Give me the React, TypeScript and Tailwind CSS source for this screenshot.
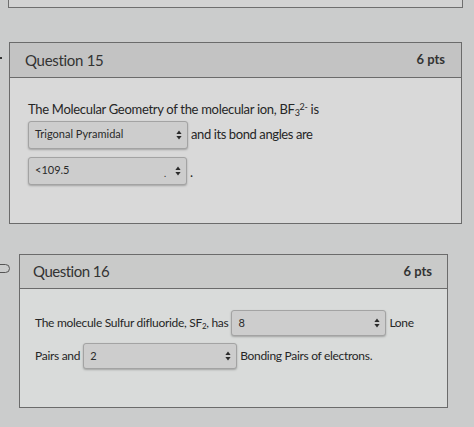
import React from 'react'

function Arrows() {
  return (
    <svg width="6" height="10" viewBox="0 0 6 10" className="shrink-0">
      <path d="M3 0.5 L5.6 4 H0.4 Z" fill="#2b2b2b" />
      <path d="M3 9.5 L5.6 6 H0.4 Z" fill="#2b2b2b" />
    </svg>
  )
}

function Select({ value, className, dot }: { value: string; className: string; dot?: boolean }) {
  return (
    <div
      className={`flex items-center justify-between rounded-[3px] border border-[#a3a3a3] bg-[#cdcdcd] pl-[6px] pr-[5px] text-[11px] text-[#2a2a2a] shadow-[0_1px_2px_rgba(0,0,0,0.25)] ${className}`}
    >
      <span>{value}</span>
      <span className="flex items-center gap-[9px]">
        {dot && <span className="mt-[6px] text-[9px] leading-none">.</span>}
        <Arrows />
      </span>
    </div>
  )
}

export default function App() {
  return (
    <div
      className="relative h-[427px] w-[474px] overflow-hidden bg-[#cbcccc] text-[#262626]"
      style={{ fontFamily: 'Lato, "Open Sans", sans-serif' }}
    >
      {/* previous question tail */}
      <div className="ml-[8px] h-[8px] w-[455px] border-x border-b border-[#6f6f6f] bg-[#d3d3d3]" />

      {/* Question 15 */}
      <div className="ml-[9px] mt-[34px] w-[453px] border border-[#6b6b6b]">
        <div className="flex h-[35px] items-center justify-between border-b border-[#6b6b6b] bg-[#c3c3c3] pl-[15px] pr-[16px]">
          <span className="text-[15px] tracking-[-0.3px] text-[#333]">Question 15</span>
          <span className="text-[13px] font-bold text-[#333]">6 pts</span>
        </div>
        <div className="h-[145px] bg-[#d9d9d9] pl-[18px] pt-[22px]">
          <p className="text-[13px] tracking-[-0.3px]">
            The Molecular Geometry of the molecular ion, BF<sub className="text-[9px]">3</sub>
            <sup className="text-[9px]">2-</sup> is
          </p>
          <div className="mt-[1px] flex items-center gap-[3px]">
            <Select value="Trigonal Pyramidal" className="h-[28px] w-[160px]" />
            <span className="text-[13px] tracking-[-0.4px]">and its bond angles are</span>
          </div>
          <div className="mt-[8px] flex items-center gap-[3px]">
            <Select value="<109.5" className="h-[28px] w-[159px]" dot />
            <span className="mt-[4px] text-[13px]">.</span>
          </div>
        </div>
      </div>

      {/* flag icon */}
      <div className="absolute left-[-6px] top-[264px] h-[9px] w-[16px] rounded-r-[5px] border-[1.5px] border-[#555]" />
      <div className="absolute left-0 top-[57px] h-[2px] w-[2px] bg-[#333]" />

      {/* Question 16 */}
      <div className="ml-[19px] mt-[30px] w-[429px] border border-[#6b6b6b]">
        <div className="flex h-[34px] items-center justify-between border-b border-[#6b6b6b] bg-[#c9cac9] pl-[13px] pr-[15px]">
          <span className="text-[15px] tracking-[-0.5px] text-[#333]">Question 16</span>
          <span className="text-[13px] font-bold text-[#333]">6 pts</span>
        </div>
        <div className="h-[118px] bg-[#d9dbda] pl-[15px] pt-[21px]">
          <div className="flex items-center gap-[3px] text-[12px] tracking-[-0.3px]">
            <span>
              The molecule Sulfur difluoride, SF<sub className="text-[8px]">2</sub>, has
            </span>
            <Select value="8" className="h-[26px] w-[155px]" />
            <span className="text-[12px]">Lone</span>
          </div>
          <div className="mt-[7px] flex items-center gap-[3px] text-[12px] tracking-[-0.3px]">
            <span>Pairs and</span>
            <Select value="2" className="h-[26px] w-[154px]" />
            <span>Bonding Pairs of electrons.</span>
          </div>
        </div>
      </div>
    </div>
  )
}
